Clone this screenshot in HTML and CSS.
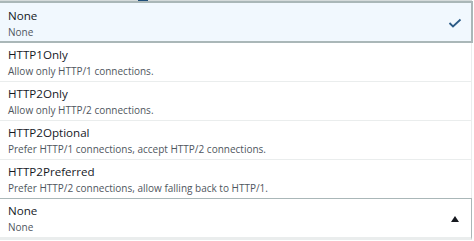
FILE: index.html
```html
<!DOCTYPE html>
<html lang="en">

<head>
    <meta charset="UTF-8">
    <meta name="viewport" content="width=device-width, initial-scale=1.0">
    <title>HTTP version</title>
    <link rel="stylesheet" href="styles.css">
</head>

<body>
    <div class="edge"><span class="peek"></span></div>
    <ul class="options">
        <li class="option selected">
            <div class="label">None</div>
            <div class="description">None</div>
            <svg class="check" width="14" height="10" viewBox="0 0 14 10">
                <path d="M1.5 5 L5 8.5 L12.5 1.5" fill="none" stroke="#2b5b86" stroke-width="1.8" />
            </svg>
        </li>
        <li class="option">
            <div class="label">HTTP1Only</div>
            <div class="description">Allow only HTTP/1 connections.</div>
        </li>
        <li class="option">
            <div class="label">HTTP2Only</div>
            <div class="description">Allow only HTTP/2 connections.</div>
        </li>
        <li class="option">
            <div class="label">HTTP2Optional</div>
            <div class="description">Prefer HTTP/1 connections, accept HTTP/2 connections.</div>
        </li>
        <li class="option">
            <div class="label">HTTP2Preferred</div>
            <div class="description">Prefer HTTP/2 connections, allow falling back to HTTP/1.</div>
        </li>
    </ul>
    <div class="trigger">
        <div>
            <div class="label">None</div>
            <div class="description">None</div>
        </div>
        <span class="caret"></span>
    </div>
</body>

</html>
```

FILE: styles.css
```css
:root {
    --text: #16191f;
    --muted: #4f565e;
    --border: #aab7b8;
    --divider: #eaeded;
    --selected: #f1f8fe;
    --font: "Open Sans", sans-serif;
}

body {
    margin: 0;
    width: 474px;
    height: 241px;
    overflow: hidden;
    background-color: #ffffff;
    font-family: var(--font);
    color: var(--text);
}

.edge {
    height: 1px;
    width: 472px;
    background-color: #d5dbdb;
    display: flex;
}

.peek {
    margin-left: 138px;
    width: 10px;
    background-color: #1f4f7a;
}

.options {
    list-style: none;
    margin: 0;
    padding: 0;
    width: 471px;
    border-right: 1px solid var(--divider);
}

.option {
    position: relative;
    padding: 5px 8px 3px;
    border-bottom: 1px solid var(--divider);
}

.option:last-child {
    border-bottom: none;
}

.option.selected {
    padding: 6px 8px 2px;
    background-color: var(--selected);
    border-top: 2px solid var(--border);
    border-bottom: 2px solid var(--border);
    border-right: 2px solid var(--border);
    margin-right: -2px;
}

.label {
    font-size: 11.6px;
    line-height: 14px;
    font-weight: 500;
}

.description {
    margin-top: 2px;
    font-size: 10px;
    line-height: 14px;
    color: var(--muted);
}

.check {
    position: absolute;
    right: 9px;
    top: 15px;
}

.trigger {
    display: flex;
    align-items: center;
    justify-content: space-between;
    width: 454px;
    padding: 5px 9px 3px 8px;
    border-top: 1px solid var(--border);
    border-right: 1px solid var(--border);
    border-bottom: 3px solid var(--divider);
}

.caret {
    width: 0;
    height: 0;
    margin-right: 3px;
    border-left: 4.5px solid transparent;
    border-right: 4.5px solid transparent;
    border-bottom: 6px solid var(--text);
}
```
